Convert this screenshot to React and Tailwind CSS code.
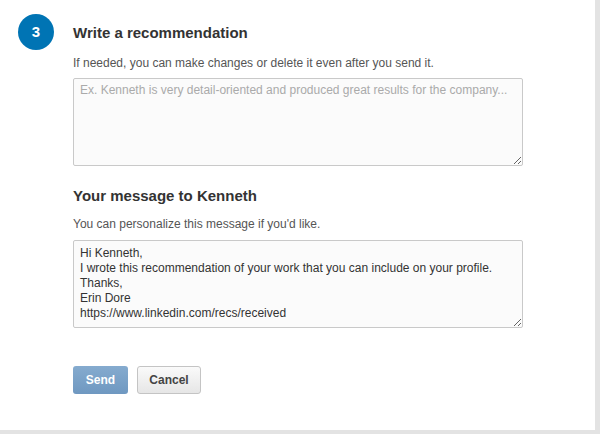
import React from 'react';

const message = `Hi Kenneth,
I wrote this recommendation of your work that you can include on your profile.
Thanks,
Erin Dore
https://www.linkedin.com/recs/received`;

function StepBadge({ n }) {
  return (
    <div className="w-9 h-9 rounded-full bg-[#0074b4] text-white flex items-center justify-center text-[15px] font-bold shrink-0">
      {n}
    </div>
  );
}

export default function App() {
  return (
    <div className="w-[600px] h-[434px] bg-[#e3e3e3] font-['Liberation_Sans',Arial,sans-serif]">
      <div className="w-[595px] h-[430px] bg-white flex pl-[18px] pt-[14px]">
        <StepBadge n={3} />

        <div className="ml-[19px] w-[450px]">
          {/* Recommendation */}
          <h2 className="text-[15px] font-bold text-[#333] leading-5 mt-[9px]">Write a recommendation</h2>
          <p className="text-[12px] text-[#555] mt-[12px] leading-4">
            If needed, you can make changes or delete it even after you send it.
          </p>
          <textarea
            className="mt-[7px] w-[450px] h-[88px] block border border-[#c9c9c9] bg-[#fbfbfb] rounded-[2px] px-[6px] pt-[4px] pb-[3px] text-[12px] leading-[15px] text-[#333] placeholder:text-[#aaa] outline-none"
            placeholder="Ex. Kenneth is very detail-oriented and produced great results for the company..."
          />

          {/* Message */}
          <h2 className="text-[15px] font-bold text-[#333] leading-5 mt-[20px]">Your message to Kenneth</h2>
          <p className="text-[12px] text-[#555] mt-[10px] leading-4">
            You can personalize this message if you'd like.
          </p>
          <textarea
            className="mt-[8px] w-[450px] h-[88px] block border border-[#c9c9c9] bg-[#fbfbfb] rounded-[2px] px-[6px] pt-[5px] pb-[3px] text-[12px] leading-[15px] text-[#333] outline-none"
            defaultValue={message}
          />

          <div className="flex gap-[9px] mt-[38px]">
            <button className="w-[55px] h-[28px] rounded-[3px] bg-gradient-to-b from-[#85abcf] to-[#6f98c1] text-white text-[12px] font-bold">
              Send
            </button>
            <button className="w-[64px] h-[28px] rounded-[3px] border border-[#c4c4c4] bg-gradient-to-b from-[#fafafa] to-[#e6e6e6] text-[#444] text-[12px] font-bold">
              Cancel
            </button>
          </div>
        </div>
      </div>
    </div>
  );
}
